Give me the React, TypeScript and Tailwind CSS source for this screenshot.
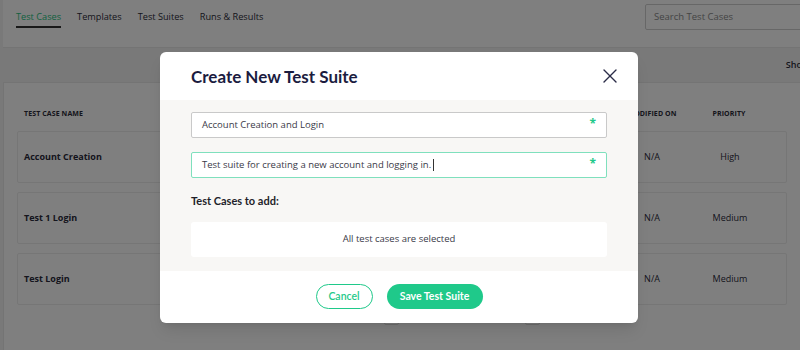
import { X } from "lucide-react"

const rows = [
  { name: "Account Creation", modified: "N/A", priority: "High" },
  { name: "Test 1 Login", modified: "N/A", priority: "Medium" },
  { name: "Test Login", modified: "N/A", priority: "Medium" },
]

const tabs = ["Test Cases", "Templates", "Test Suites", "Runs & Results"]

const App = () => {
  return (
    <div className="relative w-full h-[350px] overflow-hidden bg-[#f3f3f3] font-['Open_Sans',sans-serif] text-[#2a2a3a]">
      {/* top nav */}
      <div className="ml-[3px] h-[48px] bg-white border-b border-[#e8e8e8] flex items-start justify-between pl-[13px]">
        <nav className="flex gap-[16px] pt-[10px] text-[9.2px]">
          {tabs.map((t, i) => (
            <div
              key={t}
              className={
                i === 0
                  ? "pb-[2px] border-b-2 border-[#333] text-[#1fc27f]"
                  : "pb-[2px] text-[#2b2b38]"
              }
            >
              {t}
            </div>
          ))}
        </nav>
        <div className="mt-[4px] -mr-[10px] w-[165px] h-[26px] border border-[#cfcfcf] rounded-[2px] bg-white flex items-center px-[8px] text-[9.5px] text-[#8a8a8a]">
          Search Test Cases
        </div>
      </div>

      <div className="h-[34px] flex items-center justify-end text-[9px] text-[#2b2b38] -mr-[30px]">
        <span className="font-semibold">Showing 3</span>
      </div>

      {/* main card */}
      <div className="ml-[3px] bg-white border-t border-l border-[#e8e8e8] h-[300px] px-[13px]">
        <div className="flex items-center h-[48px] pt-[14px] text-[7px] font-bold uppercase tracking-[0.1px] text-[#2b2b38]">
          <div className="pl-[7px] w-[600px]">Test Case Name</div>
          <div className="w-[70px] text-center">Modified On</div>
          <div className="w-[84px] text-center">Priority</div>
        </div>
        <div className="flex flex-col gap-[9px]">
          {rows.map((r) => (
            <div
              key={r.name}
              className="flex items-center h-[52px] border border-[#ececec] rounded-[2px] text-[9px]"
            >
              <div className="pl-[6px] w-[600px] font-bold">{r.name}</div>
              <div className="w-[68px] text-center">{r.modified}</div>
              <div className="w-[88px] text-center">{r.priority}</div>
            </div>
          ))}
        </div>
        <div className="flex items-center mt-[6px] ml-[367px] gap-[40px] text-[9px]">
          <div className="w-[15px] h-[14px] border border-[#ddd] rounded-[2px]" />
          <span>Page 1 of 1</span>
          <div className="w-[15px] h-[14px] border border-[#ddd] rounded-[2px]" />
        </div>
      </div>

      {/* overlay */}
      <div className="absolute inset-0 bg-black/50" />

      {/* modal */}
      <div className="absolute left-[160px] top-[52px] w-[478px] h-[271px] bg-white rounded-[6px] overflow-hidden flex flex-col shadow-lg">
        <div className="h-[48px] flex items-center justify-between pl-[31px] pr-[16px]">
          <h2 className="font-['Lato',sans-serif] font-bold text-[17px] text-[#1b1c3f] pt-[1px]">
            Create New Test Suite
          </h2>
          <X className="w-[24px] h-[24px] text-[#2b2c48]" strokeWidth={1.4} />
        </div>
        <div className="bg-[#f8f7f5] px-[31px] pt-[12px] h-[171px]">
          <div className="relative h-[26px] bg-white border border-[#c9c9c9] rounded-[2px] flex items-center pl-[10px] text-[9.5px] text-[#3a3a48]">
            Account Creation and Login
            <span className="absolute right-[10px] top-[2px] text-[#1fc98a] text-[12px] font-bold">*</span>
          </div>
          <div className="relative mt-[14px] h-[26px] bg-white border border-[#7fe0bd] rounded-[2px] flex items-center pl-[10px] text-[9.5px] text-[#3a3a48]">
            Test suite for creating a new account and logging in.
            <span className="ml-[2px] w-px h-[12px] bg-[#333]" />
            <span className="absolute right-[10px] top-[2px] text-[#1fc98a] text-[12px] font-bold">*</span>
          </div>
          <div className="mt-[15px] font-['Lato',sans-serif] font-bold text-[11px] text-[#1f1f2a]">
            Test Cases to add:
          </div>
          <div className="mt-[12px] h-[35px] bg-white rounded-[3px] flex items-center justify-center text-[9.5px] text-[#3a3a48]">
            All test cases are selected
          </div>
        </div>
        <div className="flex-1 flex items-center justify-center gap-[14px] pb-[1px]">
          <button className="w-[57px] h-[25px] rounded-full border border-[#1fc98a] text-[#1fc98a] font-['Lato',sans-serif] font-semibold text-[10.5px]">
            Cancel
          </button>
          <button className="w-[96px] h-[25px] rounded-full bg-[#1fc98a] text-white font-['Lato',sans-serif] font-bold text-[10.5px]">
            Save Test Suite
          </button>
        </div>
      </div>
    </div>
  )
}

export default App
